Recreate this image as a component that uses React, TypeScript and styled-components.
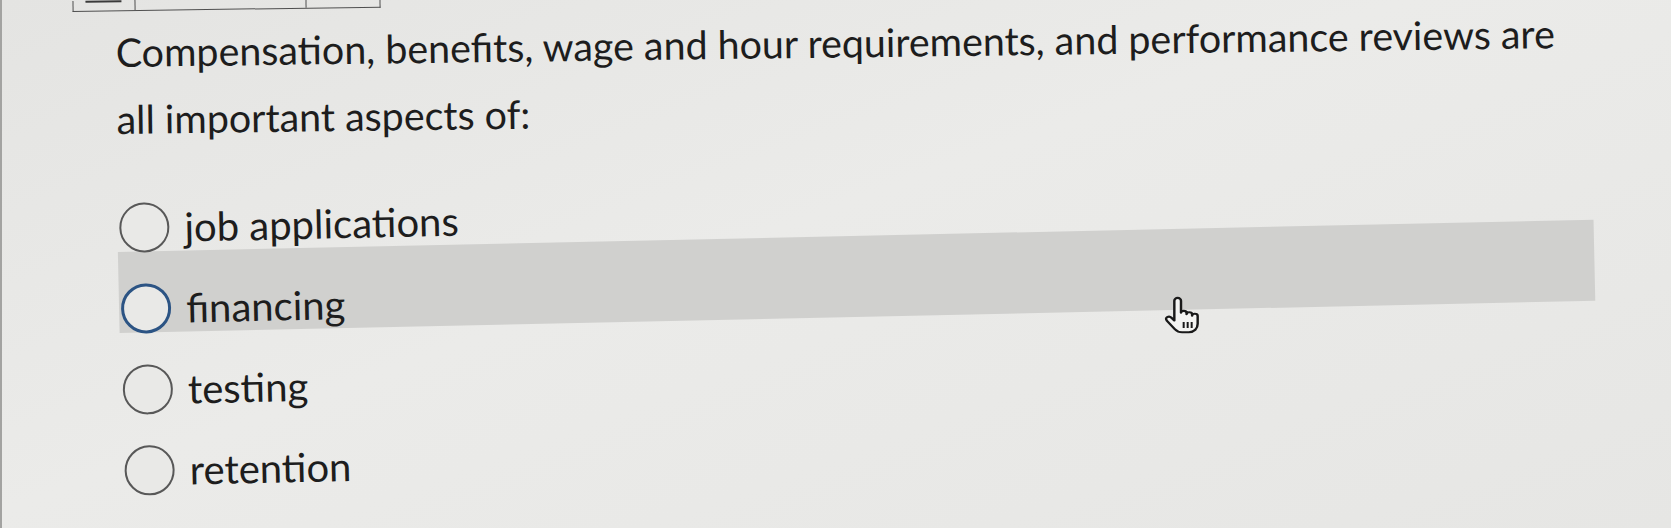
import React from 'react';
import styled, {createGlobalStyle} from 'styled-components';

// Page
const GlobalStyle = createGlobalStyle`
    html, body {
        margin: 0;
        padding: 0;
        background: #e7e7e5;
    }
    body {
        font-family: Lato, "Open Sans", "Liberation Sans", sans-serif;
        -webkit-font-smoothing: antialiased;
    }
`;

const Screen = styled.div`
    position: relative;
    width: 1671px;
    height: 528px;
    overflow: hidden;
    box-sizing: border-box;
    border-left: 2px solid #a3a3a1;
    background: linear-gradient(160deg, #e4e4e2 0%, #ebebe9 45%, #e6e6e4 100%);
`;

// the photo is taken a little askew, so the whole quiz is tilted
const Tilted = styled.div`
    width: 1700px;
    transform-origin: 114px 75px;
    transform: rotate(-1.25deg);
`;

// Question navigation (mostly cut off at the top)
const QuestionNav = styled.div`
    display: flex;
    margin-left: 72px;
    width: 308px;
    height: 11px;
    box-sizing: border-box;
    border: 1.5px solid #4f4f4f;
    border-top: none;
    transform-origin: left bottom;
    transform: rotate(0.45deg);
`;

const NavCell = styled.div<{ $w: number; $last?: boolean; $tab?: boolean }>`
    position: relative;
    width: ${p => p.$w}px;
    flex: ${p => p.$last ? 1 : 'none'};
    border-right: ${p => p.$last ? 'none' : '1.5px solid #4f4f4f'};
    &::before {
        content: "";
        display: ${p => p.$tab ? 'block' : 'none'};
        position: absolute;
        left: 12px;
        top: 0;
        width: 36px;
        height: 2px;
        background: #3a3a3a;
    }
`;

// Question (the top of the photo is a little less skewed)
const QuestionText = styled.p`
    width: max-content;
    margin: 7px 0 0 114px;
    font-size: 39.4px;
    line-height: 67px;
    color: #1d1d1d;
    white-space: nowrap;
    transform-origin: 0 60px;
    transform: rotate(0.5deg);
`;

// Answers
const Answers = styled.div`
    margin-top: 19px;
`;

const AnswerRow = styled.label<{ $active: boolean }>`
    display: flex;
    align-items: center;
    height: 81px;
    width: 1476px;
    margin-left: 112px;
    padding: 32px 0 0 2px;
    box-sizing: border-box;
    background: ${p => p.$active ? '#d0d0ce' : 'transparent'};
`;

const Radio = styled.span<{ $active: boolean }>`
    flex: none;
    width: 50px;
    height: 50px;
    box-sizing: border-box;
    border-radius: 50%;
    border: ${p => p.$active ? '3.5px solid #2c5484' : '2.2px solid #585858'};
    background: #e9e9e7;
`;

const AnswerLabel = styled.span`
    margin-left: 15px;
    font-size: 40px;
    line-height: 48px;
    color: #1d1d1d;
`;

// Mouse pointer over the hovered row
const Pointer = styled.svg`
    position: absolute;
    left: 1159px;
    top: 296px;
    width: 40px;
    height: 39px;
`;

const answers = ['job applications', 'financing', 'testing', 'retention'];

export default function App() {
    const hovered = 1;

    return (
        <>
            <GlobalStyle />
            <Screen>
                <Tilted>
                    <QuestionNav>
                        <NavCell $w={61} $tab />
                        <NavCell $w={170} />
                        <NavCell $w={0} $last />
                    </QuestionNav>
                    <QuestionText>
                        Compensation, benefits, wage and hour requirements, and performance reviews are
                        <br />
                        all important aspects of:
                    </QuestionText>
                    <Answers>
                        {answers.map((a, i) => (
                            <AnswerRow key={a} $active={i === hovered}>
                                <Radio $active={i === hovered} />
                                <AnswerLabel>{a}</AnswerLabel>
                            </AnswerRow>
                        ))}
                    </Answers>
                </Tilted>
                <Pointer viewBox="0 0 18 21" preserveAspectRatio="none">
                    <path
                        d="M7.5 1 C8.3 1 9 1.7 9 2.5 L9 9 C9 8.4 9.6 8 10.2 8 C10.9 8 11.5 8.5 11.5 9.2 L11.5 9.8 C11.5 9.2 12.1 8.8 12.7 8.8 C13.4 8.8 14 9.3 14 10 L14 10.6 C14 10 14.6 9.6 15.2 9.6 C15.9 9.6 16.5 10.1 16.5 10.8 L16.5 15 C16.5 17.5 15 19.5 12.5 19.5 L9.5 19.5 C8 19.5 7 18.8 6.2 17.8 L2.6 13.2 C2.1 12.6 2.2 11.8 2.8 11.4 C3.4 11 4.2 11.1 4.7 11.7 L6 13.2 L6 2.5 C6 1.7 6.7 1 7.5 1 Z"
                        fill="#f4f4f2"
                        stroke="#1a1a1a"
                        strokeWidth="1.1"
                        strokeLinejoin="round"
                    />
                    <path d="M10.2 14 V17.2 M12 14 V17.2 M13.8 14 V17.2" stroke="#1a1a1a" strokeWidth="0.9" />
                </Pointer>
            </Screen>
        </>
    );
}
